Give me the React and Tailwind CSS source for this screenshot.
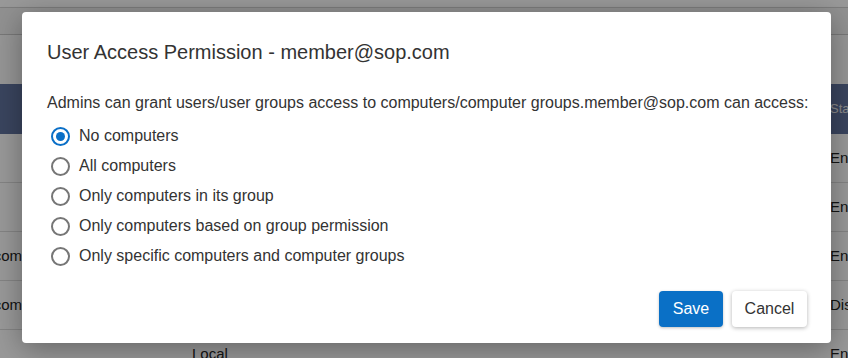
import React, { useState } from 'react';

const options = [
  { id: 'none', label: 'No computers' },
  { id: 'all', label: 'All computers' },
  { id: 'group', label: 'Only computers in its group' },
  { id: 'perm', label: 'Only computers based on group permission' },
  { id: 'specific', label: 'Only specific computers and computer groups' },
];

const rows = [
  { left: '', mid: '', status: 'Ena' },
  { left: '', mid: '', status: 'Ena' },
  { left: '.com', mid: '', status: 'Ena' },
  { left: '.com', mid: '', status: 'Dis' },
  { left: '', mid: 'Local', status: 'Ena' },
];

const Radio = ({ checked }) => (
  <span
    className={`w-[19px] h-[19px] rounded-full border-2 flex items-center justify-center flex-shrink-0 ${
      checked ? 'border-[#0a6fc7]' : 'border-[#767676]'
    }`}
  >
    {checked && <span className="w-[9px] h-[9px] rounded-full bg-[#0a6fc7]" />}
  </span>
);

const App = () => {
  const [value, setValue] = useState('none');

  return (
    <div className="relative w-[848px] h-[358px] overflow-hidden bg-white font-['Liberation_Sans',Arial,sans-serif] text-[#333]">
      {/* Background page */}
      <div className="flex flex-col">
        <div className="h-[8px] bg-white border-b border-[#d4d4d4]" />
        <div className="h-[27px] bg-[#f2f2f2] border-b border-[#c8c8c8] shadow-sm" />
        <div className="h-[49px] bg-[#fafafa]" />
        <div className="h-[50px] bg-[#62739e] flex items-center text-[#e8e8e8] text-[13px]">
          <div className="flex-1" />
          <div className="w-[18px] whitespace-nowrap">Sta</div>
        </div>
        {rows.map((r, i) => (
          <div key={i} className="h-[49px] flex items-center border-b border-[#dcdcdc] text-[15px] text-[#222] bg-white">
            <div className="w-[22px] whitespace-nowrap flex justify-end">
              <span>{r.left}</span>
            </div>
            <div className="w-[170px]" />
            <div className="flex-1 whitespace-nowrap">{r.mid}</div>
            <div className="w-[18px] whitespace-nowrap">{r.status}</div>
          </div>
        ))}
      </div>

      {/* Overlay */}
      <div className="absolute inset-0 bg-black/40" />

      {/* Modal */}
      <div className="absolute left-[22px] top-[12px] w-[809px] h-[331px] bg-white rounded-[4px] shadow-[0_6px_30px_rgba(0,0,0,0.35)] flex flex-col pl-[25px] pr-[24px] pt-[27px] pb-[16px]">
        <h2 className="text-[20px] leading-[26px] text-[#333]">User Access Permission - member@sop.com</h2>
        <p className="mt-[26px] text-[16px] leading-6 text-[#333] whitespace-nowrap">
          Admins can grant users/user groups access to computers/computer groups.member@sop.com can access:
        </p>
        <div className="mt-[6px] flex flex-col">
          {options.map((o) => (
            <label
              key={o.id}
              className="h-[30px] flex items-center gap-[9px] pl-[4px] cursor-pointer text-[16px] text-[#333]"
              onClick={() => setValue(o.id)}
            >
              <Radio checked={value === o.id} />
              <span>{o.label}</span>
            </label>
          ))}
        </div>
        <div className="mt-auto flex justify-end gap-[9px]">
          <button className="w-[64px] h-[36px] rounded-[4px] bg-[#0a70c6] text-white text-[16px] shadow-[0_1px_3px_rgba(0,0,0,0.25)]">
            Save
          </button>
          <button className="w-[75px] h-[36px] rounded-[4px] bg-white text-[#333] text-[16px] shadow-[0_1px_4px_rgba(0,0,0,0.3)]">
            Cancel
          </button>
        </div>
      </div>
    </div>
  );
};

export default App;
